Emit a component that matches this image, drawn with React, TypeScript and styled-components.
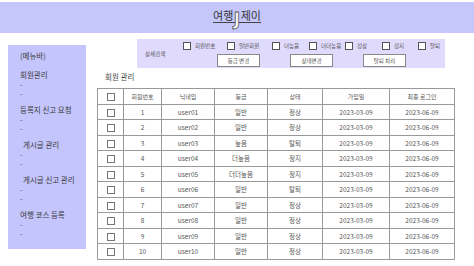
import React from "react";
import styled, { createGlobalStyle } from "styled-components";

const GlobalStyle = createGlobalStyle`
  body {
    margin: 0;
    background: #ffffff;
    font-family: "Noto Sans CJK KR", "Noto Sans", sans-serif;
    color: #333;
  }
`;

type Member = {
  no: number;
  nick: string;
  grade: string;
  status: string;
};

const members: Member[] = [
  { no: 1, nick: "user01", grade: "일반", status: "정상" },
  { no: 2, nick: "user02", grade: "일반", status: "정상" },
  { no: 3, nick: "user03", grade: "높음", status: "탈퇴" },
  { no: 4, nick: "user04", grade: "더높음", status: "정지" },
  { no: 5, nick: "user05", grade: "더더높음", status: "정지" },
  { no: 6, nick: "user06", grade: "일반", status: "탈퇴" },
  { no: 7, nick: "user07", grade: "일반", status: "정상" },
  { no: 8, nick: "user08", grade: "일반", status: "정상" },
  { no: 9, nick: "user09", grade: "일반", status: "정상" },
  { no: 10, nick: "user10", grade: "일반", status: "정상" },
];

const menu = [
  { title: "회원관리", indent: false },
  { title: "등록지 신고 요청", indent: false },
  { title: "게시글 관리", indent: true },
  { title: "게시글 신고 관리", indent: true },
  { title: "여행 코스 등록", indent: false },
];

const filters = [
  { label: "회원번호", width: 44 },
  { label: "일반회원", width: 45 },
  { label: "더높음", width: 37 },
  { label: "더더높음", width: 36 },
  { label: "정상", width: 37 },
  { label: "정지", width: 36 },
  { label: "탈퇴", width: 30 },
];

export default function App() {
  return (
    <>
      <GlobalStyle />
      <SHeader>
        <STitle>
          여행<SLogoJ>J</SLogoJ>제이
        </STitle>
      </SHeader>
      <SBody>
        <SSidebar>
          <SMenuHead>(메뉴바)</SMenuHead>
          {menu.map((m) => (
            <SMenuGroup key={m.title}>
              <SMenuTitle $indent={m.indent}>{m.title}</SMenuTitle>
              <SMenuDash>-</SMenuDash>
              <SMenuDash>-</SMenuDash>
            </SMenuGroup>
          ))}
        </SSidebar>
        <SMain>
          <SFilterPanel>
            <SFilterLabel>상세검색</SFilterLabel>
            <SFilterBody>
              <SCheckRow>
                {filters.map((f) => (
                  <SCheckItem key={f.label} $width={f.width}>
                    <SFilterBox />
                    <span>{f.label}</span>
                  </SCheckItem>
                ))}
              </SCheckRow>
              <SButtonRow>
                <SButton>등급 변경</SButton>
                <SButton>상태변경</SButton>
                <SButton>탈퇴 처리</SButton>
              </SButtonRow>
            </SFilterBody>
          </SFilterPanel>
          <SSectionTitle>회원 관리</SSectionTitle>
          <STable>
            <colgroup>
              <col style={{ width: 26 }} />
              <col style={{ width: 38 }} />
              <col style={{ width: 53 }} />
              <col style={{ width: 53 }} />
              <col style={{ width: 55 }} />
              <col style={{ width: 67 }} />
              <col style={{ width: 65 }} />
            </colgroup>
            <thead>
              <tr>
                <STh>
                  <SBox />
                </STh>
                <STh>회원번호</STh>
                <STh>닉네임</STh>
                <STh>등급</STh>
                <STh>상태</STh>
                <STh>가입일</STh>
                <STh>최종 로그인</STh>
              </tr>
            </thead>
            <tbody>
              {members.map((m) => (
                <tr key={m.no}>
                  <STd>
                    <SBox />
                  </STd>
                  <STd>{m.no}</STd>
                  <STd>{m.nick}</STd>
                  <STd>{m.grade}</STd>
                  <STd>{m.status}</STd>
                  <STd>2023-03-09</STd>
                  <STd>2023-06-09</STd>
                </tr>
              ))}
            </tbody>
          </STable>
        </SMain>
      </SBody>
    </>
  );
}

const SHeader = styled.header`
  margin-top: 2px;
  height: 31px;
  background: #c5c7fb;
  display: flex;
  justify-content: center;
  align-items: center;
`;

const STitle = styled.a`
  display: inline-block;
  font-size: 11px;
  line-height: 13px;
  color: #333;
  border-bottom: 1px solid #444;
  margin-bottom: 3px;
  white-space: nowrap;
`;

const SLogoJ = styled.span`
  display: inline-block;
  font-family: "DejaVu Sans", sans-serif;
  font-weight: bold;
  font-size: 17px;
  line-height: 0;
  color: #ffffff;
  -webkit-text-stroke: 0.8px #555;
  vertical-align: -5px;
  margin: 0 0.5px;
`;

const SBody = styled.div`
  display: flex;
  align-items: flex-start;
`;

const SSidebar = styled.nav`
  margin: 12px 0 0 8px;
  width: 78px;
  height: 204px;
  box-sizing: border-box;
  padding: 6px 0 0 12px;
  background: #c4c5fc;
  font-size: 7.5px;
  color: #3a3a3a;
`;

const SMenuHead = styled.div`
  line-height: 10px;
  margin-bottom: 9px;
`;

const SMenuGroup = styled.div`
  margin-bottom: 8px;
`;

const SMenuTitle = styled.div<{ $indent: boolean }>`
  line-height: 10px;
  padding-left: ${(p) => (p.$indent ? 3 : 0)}px;
`;

const SMenuDash = styled.div`
  line-height: 8.5px;
  font-size: 7px;
`;

const SMain = styled.main`
  margin: 6px 0 0 11px;
  display: flex;
  flex-direction: column;
`;

const SFilterPanel = styled.section`
  margin-left: 40px;
  width: 308px;
  height: 29px;
  background: #e0dafc;
  display: grid;
  grid-template-columns: 46px 1fr;
  font-size: 5.5px;
  color: #555;
`;

const SFilterLabel = styled.div`
  align-self: center;
  padding-left: 8px;
`;

const SFilterBody = styled.div`
  display: flex;
  flex-direction: column;
  padding-top: 3px;
`;

const SCheckRow = styled.div`
  display: flex;
  height: 8px;
  align-items: center;
  margin-bottom: 4px;
`;

const SCheckItem = styled.label<{ $width: number }>`
  width: ${(p) => p.$width}px;
  display: flex;
  align-items: center;
  gap: 4px;
  white-space: nowrap;
`;

const SFilterBox = styled.span`
  width: 6px;
  height: 6px;
  border: 1px solid #555;
  background: #fff;
  flex: none;
`;

const SButtonRow = styled.div`
  display: flex;
  gap: 30px;
  padding-left: 34px;
`;

const SButton = styled.button`
  width: 43px;
  height: 13px;
  padding: 0;
  background: #ffffff;
  border: 1px solid #888;
  font-family: inherit;
  font-size: 5.5px;
  color: #555;
`;

const SSectionTitle = styled.h2`
  margin: 3px 0 5px;
  padding-left: 8px;
  font-size: 7.5px;
  font-weight: normal;
  line-height: 12px;
  color: #444;
`;

const STable = styled.table`
  border-collapse: collapse;
  table-layout: fixed;
  width: 357px;
  border: 1px solid #999;
  font-size: 6.5px;
  color: #555;
`;

const STh = styled.th`
  height: 14.5px;
  padding: 0;
  border: 1px solid #999;
  font-weight: normal;
  font-size: 6px;
  text-align: center;
`;

const STd = styled.td`
  height: 14.5px;
  padding: 0;
  border: 1px solid #999;
  text-align: center;
`;

const SBox = styled.span`
  display: inline-block;
  vertical-align: middle;
  width: 6px;
  height: 6px;
  border: 1px solid #777;
  background: #fff;
`;
